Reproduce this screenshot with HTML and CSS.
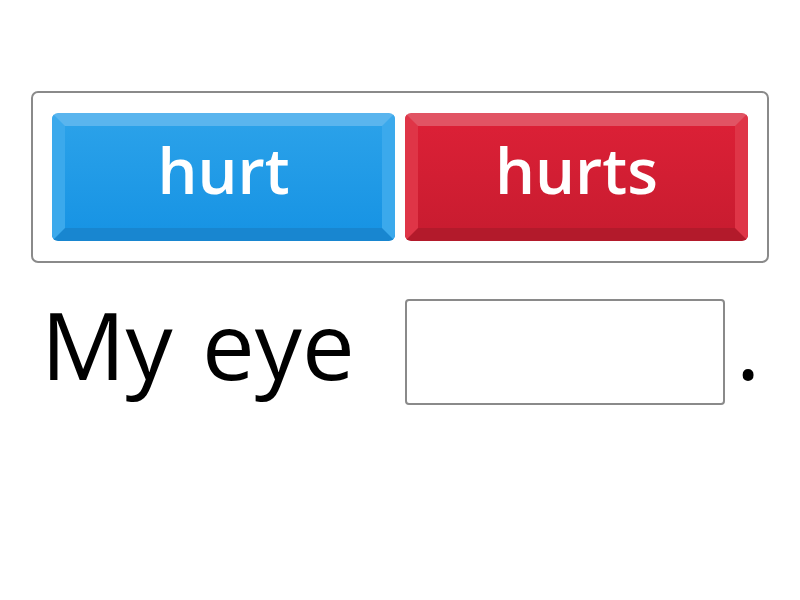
FILE: index.html
```html
<!DOCTYPE html>
<html>
<head>
<meta charset="utf-8">
<link rel="stylesheet" href="styles.css">
</head>
<body>
<div class="options">
  <div class="tile tile-blue">hurt</div>
  <div class="tile tile-red">hurts</div>
</div>
<div class="sentence">
  <span class="words">My eye</span>
  <span class="blank"></span>
  <span class="dot">.</span>
</div>
</body>
</html>
```

FILE: styles.css
```css
html, body {
  margin: 0;
  padding: 0;
  background: #ffffff;
}
body {
  width: 800px;
  height: 600px;
  overflow: hidden;
}
.options {
  box-sizing: border-box;
  margin: 91px 0 0 31px;
  width: 738px;
  height: 172px;
  border: 2px solid #8a8a8a;
  border-radius: 7px;
  padding: 20px 19px;
  display: flex;
  gap: 10px;
}
.tile {
  box-sizing: border-box;
  flex: 1;
  height: 128px;
  border-radius: 6px;
  border-style: solid;
  border-width: 13px;
  display: flex;
  align-items: center;
  justify-content: center;
  font-family: "Open Sans", sans-serif;
  font-weight: 600;
  font-size: 63px;
  color: #ffffff;
  line-height: 1;
  padding-bottom: 16px;
}
.tile-blue {
  border-color: #5ab5ee #3ba9ec #1886d0 #3ba9ec;
  background: linear-gradient(#2aa1e9, #1894e4);
}
.tile-red {
  border-color: #e15464 #df3547 #b31a2b #df3547;
  background: linear-gradient(#db2036, #c91c30);
}
.sentence {
  display: flex;
  align-items: flex-start;
  margin: 27px 0 0 41px;
  font-family: "Open Sans", sans-serif;
  font-weight: 400;
  font-size: 94px;
  color: #000000;
}
.words {
  line-height: 108px;
  word-spacing: 5px;
}
.blank {
  box-sizing: border-box;
  width: 320px;
  height: 106px;
  border: 2px solid #8a8a8a;
  border-radius: 4px;
  margin-left: 50px;
  margin-top: 9px;
}
.dot {
  line-height: 108px;
  margin-left: 11px;
}
```
